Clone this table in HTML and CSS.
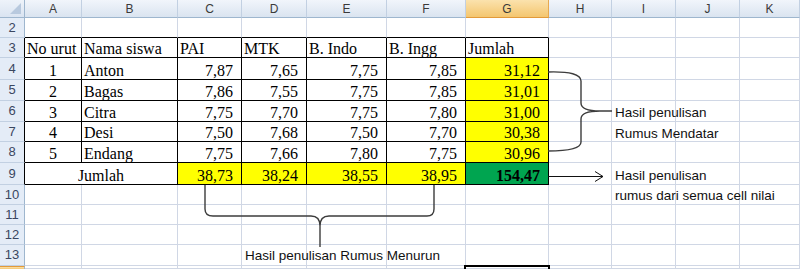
FILE: index.html
```html
<!DOCTYPE html>
<html>
<head>
<meta charset="utf-8">
<link rel="stylesheet" href="styles.css">
</head>
<body>
<div class="sheet">
  <div class="corner"><span class="tri"></span></div>
  <div class="hd">A</div><div class="hd">B</div><div class="hd">C</div><div class="hd">D</div><div class="hd">E</div><div class="hd">F</div><div class="hd sel">G</div><div class="hd">H</div><div class="hd">I</div><div class="hd">J</div><div class="hd">K</div>

  <div class="rn">2</div>
  <div class="c top"></div><div class="c top"></div><div class="c top"></div><div class="c top"></div><div class="c top"></div><div class="c top"></div><div class="c top"></div><div class="c"></div><div class="c"></div><div class="c"></div><div class="c"></div>

  <div class="rn edge">3</div>
  <div class="t l">No urut</div><div class="t l">Nama siswa</div><div class="t l">PAI</div><div class="t l">MTK</div><div class="t l">B. Indo</div><div class="t l">B. Ingg</div><div class="t l">Jumlah</div><div class="c"></div><div class="c"></div><div class="c"></div><div class="c"></div>

  <div class="rn edge">4</div>
  <div class="t m">1</div><div class="t l">Anton</div><div class="t n">7,87</div><div class="t n">7,65</div><div class="t n">7,75</div><div class="t n">7,85</div><div class="t n y">31,12</div><div class="c"></div><div class="c"></div><div class="c"></div><div class="c"></div>

  <div class="rn edge">5</div>
  <div class="t m">2</div><div class="t l">Bagas</div><div class="t n">7,86</div><div class="t n">7,55</div><div class="t n">7,75</div><div class="t n">7,85</div><div class="t n y">31,01</div><div class="c"></div><div class="c"></div><div class="c"></div><div class="c"></div>

  <div class="rn edge">6</div>
  <div class="t m">3</div><div class="t l">Citra</div><div class="t n">7,75</div><div class="t n">7,70</div><div class="t n">7,75</div><div class="t n">7,80</div><div class="t n y">31,00</div><div class="c"></div><div class="c"></div><div class="c"></div><div class="c"></div>

  <div class="rn edge">7</div>
  <div class="t m">4</div><div class="t l">Desi</div><div class="t n">7,50</div><div class="t n">7,68</div><div class="t n">7,50</div><div class="t n">7,70</div><div class="t n y">30,38</div><div class="c"></div><div class="c"></div><div class="c"></div><div class="c"></div>

  <div class="rn edge">8</div>
  <div class="t m">5</div><div class="t l">Endang</div><div class="t n">7,75</div><div class="t n">7,66</div><div class="t n">7,80</div><div class="t n">7,75</div><div class="t n y">30,96</div><div class="c"></div><div class="c"></div><div class="c"></div><div class="c"></div>

  <div class="rn edge">9</div>
  <div class="t m span2">Jumlah</div><div class="t n y">38,73</div><div class="t n y">38,24</div><div class="t n y">38,55</div><div class="t n y">38,95</div><div class="t n g">154,47</div><div class="c"></div><div class="c"></div><div class="c"></div><div class="c"></div>

  <div class="rn">10</div>
  <div class="c"></div><div class="c"></div><div class="c"></div><div class="c"></div><div class="c"></div><div class="c"></div><div class="c"></div><div class="c"></div><div class="c"></div><div class="c"></div><div class="c"></div>

  <div class="rn">11</div>
  <div class="c"></div><div class="c"></div><div class="c"></div><div class="c"></div><div class="c"></div><div class="c"></div><div class="c"></div><div class="c"></div><div class="c"></div><div class="c"></div><div class="c"></div>

  <div class="rn">12</div>
  <div class="c"></div><div class="c"></div><div class="c"></div><div class="c"></div><div class="c"></div><div class="c"></div><div class="c"></div><div class="c"></div><div class="c"></div><div class="c"></div><div class="c"></div>

  <div class="rn">13</div>
  <div class="c"></div><div class="c"></div><div class="c"></div><div class="c"></div><div class="c"></div><div class="c"></div><div class="c"></div><div class="c"></div><div class="c"></div><div class="c"></div><div class="c"></div>

  <div class="rn sel"></div>
  <div class="c"></div><div class="c"></div><div class="c"></div><div class="c"></div><div class="c"></div><div class="c"></div><div class="c"></div><div class="c"></div><div class="c"></div><div class="c"></div><div class="c"></div>

  <svg class="shapes" width="800" height="269" viewBox="0 0 800 269">
    <path class="brace" d="M548,72 Q581,71 581,81 L581,103 Q581,111 600,111 L612,111 M600,111 Q581,111 581,119 L581,142 Q581,151 548,151"/>
    <path class="brace" d="M205,185 L205,209 Q205,216 213,216 L311,216 Q320,216 320,226 L320,247 M320,226 Q320,216 329,216 L427,216 Q434,216 434,209 L434,185"/>
    <path class="arrow" d="M548,176.5 L603,176.5 M595,171.5 L603,176.5 L595,181.5"/>
  </svg>
  <div class="note n1">Hasil penulisan<br>Rumus Mendatar</div>
  <div class="note n2">Hasil penulisan<br>rumus dari semua cell nilai</div>
  <div class="note n3">Hasil penulisan Rumus Menurun</div>
  <div class="selbox"></div>
</div>
</body>
</html>
```
FILE: styles.css
```css
html, body {
  margin: 0;
  padding: 0;
  background: #fff;
  overflow: hidden;
}
.sheet {
  position: relative;
  width: 800px;
  height: 269px;
  overflow: hidden;
  display: grid;
  grid-template-columns: 25px 57px 96px 64px 65px 80px 79px 83px 63px 64px 64px 1fr;
  grid-template-rows: 18px 20px 20px 22px 21px 21px 20px 21px 22px 20px 20px 20px 21px 1fr;
  font-family: "Liberation Serif", "Times New Roman", serif;
  font-size: 16px;
  line-height: 16px;
  color: #000;
}
.sheet > div {
  box-sizing: border-box;
  min-width: 0;
  min-height: 0;
  white-space: nowrap;
}
.corner {
  position: relative;
  background: linear-gradient(#eef3fa, #dae4f1);
  border-right: 1px solid #9eb6ce;
  border-bottom: 1px solid #9eb6ce;
}
.tri {
  position: absolute;
  right: 3px;
  bottom: 3px;
  width: 0;
  height: 0;
  border-left: 11px solid transparent;
  border-bottom: 11px solid #b8c9de;
}
.hd {
  background: linear-gradient(#f1f5fb, #dae4f0);
  border-right: 1px solid #c2d0e2;
  border-bottom: 1px solid #9eb6ce;
  font-family: "Liberation Sans", Arial, sans-serif;
  font-size: 12px;
  color: #3a3a3a;
  display: flex;
  align-items: center;
  justify-content: center;
}
.hd.sel {
  background: linear-gradient(#fbe2ad, #f4c66f);
  border-right: 1px solid #e7a94f;
  border-bottom: 1px solid #e29a3a;
}
.rn {
  background: #e4ecf7;
  border-right: 1px solid #9eb6ce;
  border-bottom: 1px solid #c2d0e2;
  font-family: "Liberation Sans", Arial, sans-serif;
  font-size: 13px;
  color: #3a4660;
  display: flex;
  align-items: center;
  justify-content: center;
}
.rn.edge {
  border-right: 1px solid #000;
}
.rn.sel {
  background: linear-gradient(#fbe2ad, #f4c66f);
  border-top: 1px solid #e29a3a;
  border-bottom: 0;
}
.c {
  border-right: 1px solid #d0d7e5;
  border-bottom: 1px solid #d0d7e5;
}
.c.top {
  border-bottom: 1px solid #000;
}
.t {
  border-right: 1px solid #000;
  border-bottom: 1px solid #000;
  display: flex;
  align-items: flex-end;
  overflow: hidden;
}
.t.l {
  justify-content: flex-start;
  padding-left: 2px;
}
.t.m {
  justify-content: center;
}
.t.n {
  justify-content: flex-end;
  padding-right: 8px;
}
.span2 {
  grid-column: span 2;
}
.y {
  background: #ffff00;
}
.g {
  background: #00a550;
  font-weight: bold;
}
.shapes {
  position: absolute;
  left: 0;
  top: 0;
  pointer-events: none;
}
.brace {
  fill: none;
  stroke: #3c3c3c;
  stroke-width: 1.4;
}
.arrow {
  fill: none;
  stroke: #111;
  stroke-width: 1;
}
.note {
  position: absolute;
  font-family: "Liberation Sans", Arial, sans-serif;
  font-size: 13.5px;
  color: #111;
  line-height: 20px;
}
.n1 {
  left: 615px;
  top: 102px;
  line-height: 21px;
}
.n2 {
  left: 615px;
  top: 166px;
}
.n3 {
  left: 245px;
  top: 246px;
}
.selbox {
  position: absolute;
  left: 464px;
  top: 265px;
  width: 86px;
  height: 10px;
  border: 2px solid #000;
  box-sizing: border-box;
}
```
